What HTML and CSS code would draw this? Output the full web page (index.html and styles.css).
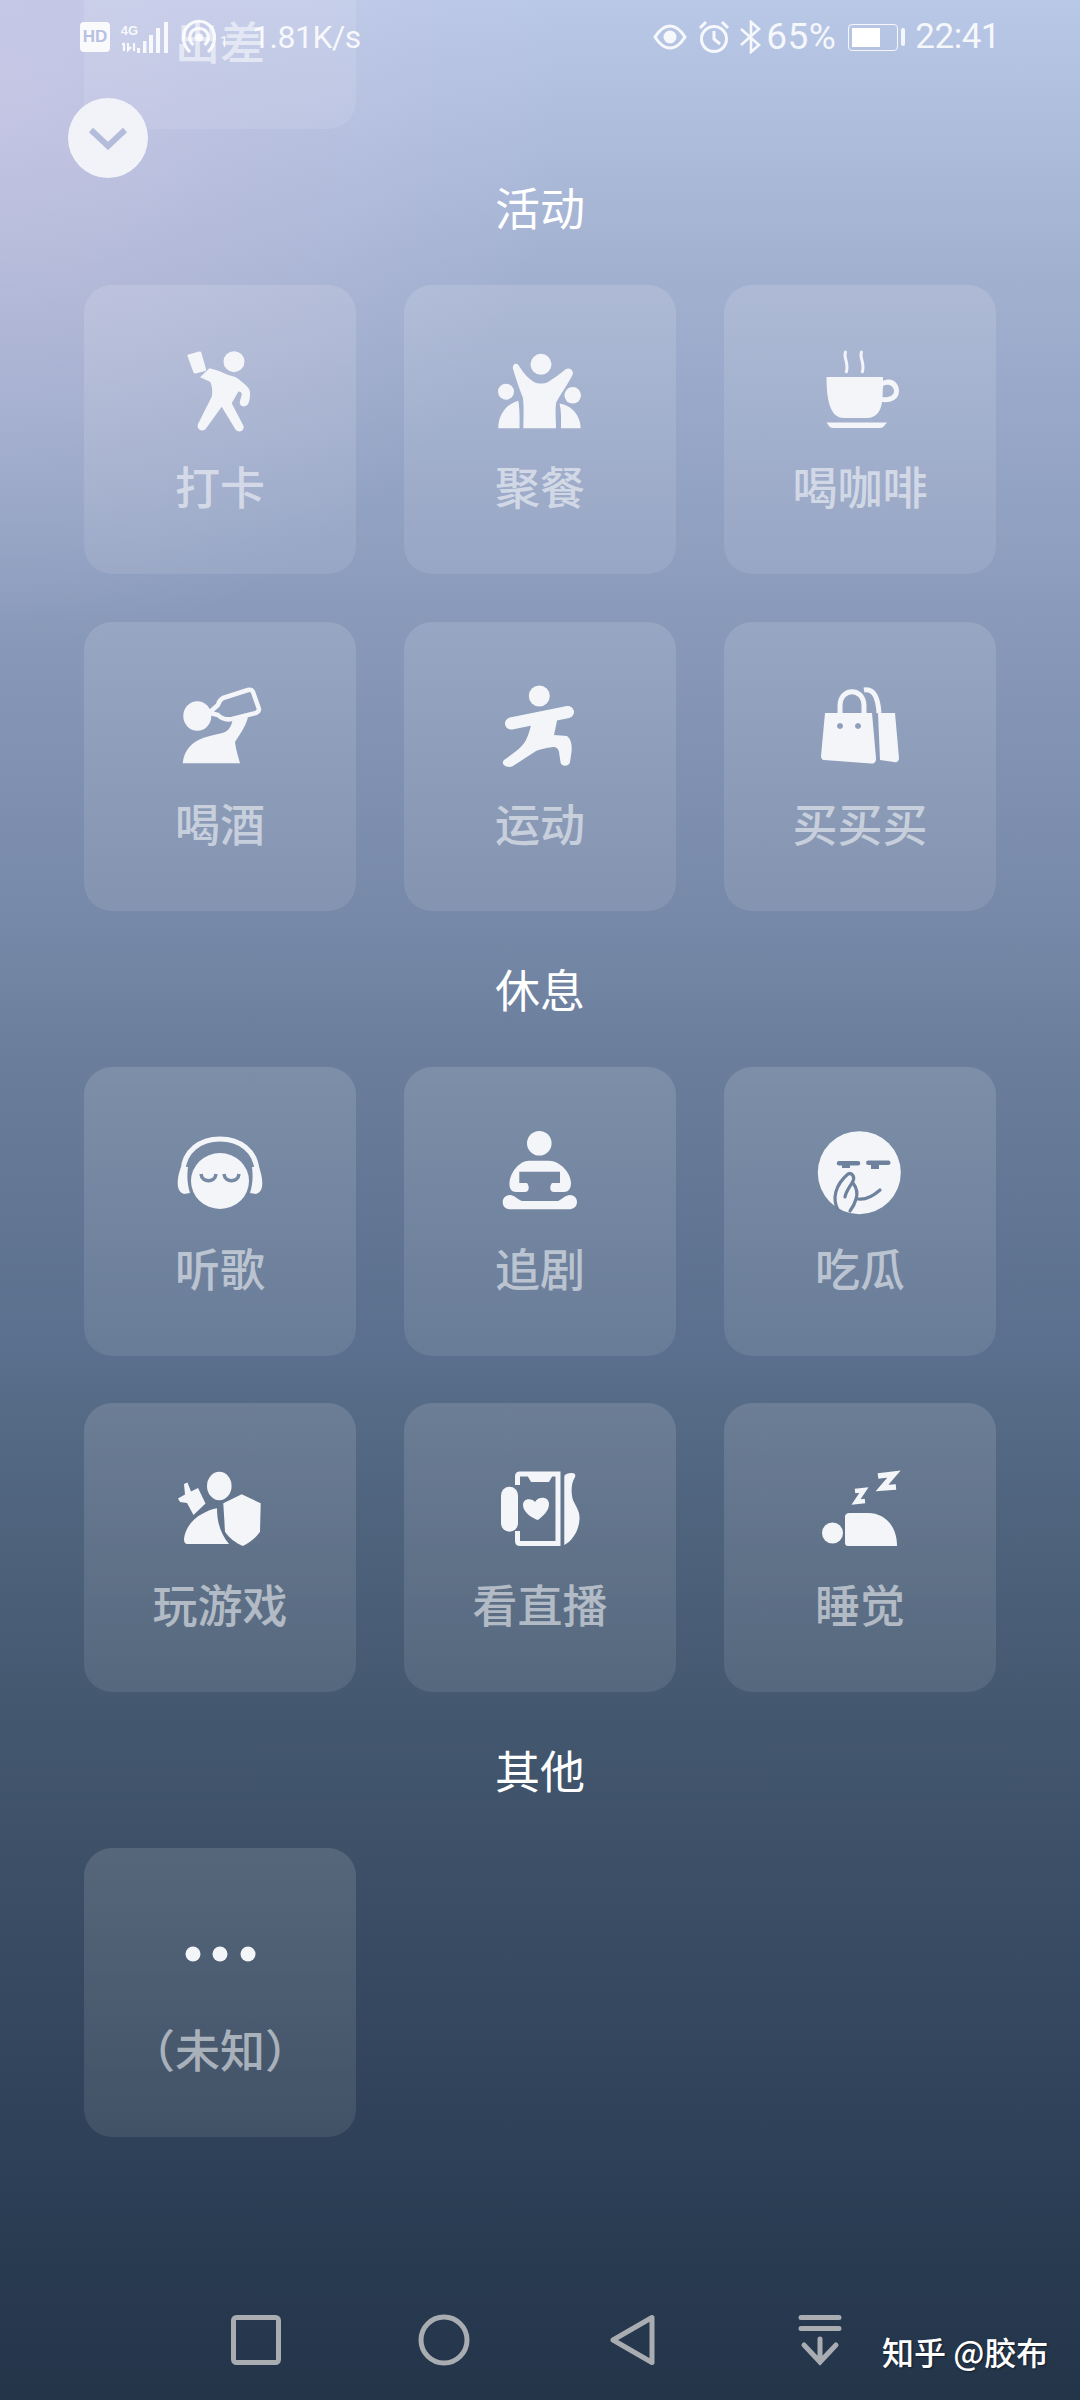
FILE: index.html
```html
<!DOCTYPE html>
<html lang="zh-CN">
<head>
    <meta charset="UTF-8">
    <meta name="viewport" content="width=device-width, initial-scale=1.0">
    <title>状态</title>
    <link rel="stylesheet" href="styles.css">
</head>
<body>
<div class="status-bar">
    <div class="status-left">
        <span class="hd-badge">HD</span>
        <span class="net-type">
            <span class="net-label">4G</span>
            <svg class="net-arrows" width="15" height="10" viewBox="0 0 15 10"><path d="M2 1v8M0 3l2-2M6 1v7l3-3M12 1v8" fill="none" stroke="currentColor" stroke-width="2.2"/></svg>
        </span>
        <svg class="signal" width="32" height="32" viewBox="0 0 32 32" fill="currentColor">
            <rect x="0" y="26" width="3" height="5"/><rect x="6" y="19" width="3.500" height="12"/><rect x="12" y="13" width="4" height="18"/><rect x="19" y="6" width="4" height="25"/><rect x="27" y="0" width="4" height="31"/>
        </svg>
        <svg class="hotspot" width="36" height="36" viewBox="0 0 36 36" fill="none" stroke="currentColor">
            <path d="M9 33C1 26 0 13 8 6c6-5 14-5 20 0 8 7 7 20-1 27" stroke-width="3.200"/>
            <path d="M12.500 26c-5-4-5-11 0-15 3-2 8-2 11 0 5 4 5 11 0 15" stroke-width="3.200"/>
            <circle cx="18" cy="18.500" r="4" fill="currentColor" stroke="none"/>
        </svg>
        <span class="hotspot-count">1</span>
        <span class="status-text speed">1.81K/s</span>
    </div>
    <div class="status-right">
        <svg class="status-eye" width="34" height="26" viewBox="0 0 34 26" fill="none" stroke="currentColor" stroke-width="3">
            <path d="M2 13C7 5 12 2 17 2s10 3 15 11c-5 8-10 11-15 11S7 21 2 13Z"/>
            <circle cx="17" cy="13" r="6.500" fill="currentColor" stroke="none"/>
        </svg>
        <svg width="32" height="34" viewBox="0 0 32 34" fill="none" stroke="currentColor" stroke-width="3">
            <circle cx="16" cy="19" r="12.500"/>
            <path d="M16 11v8l6 5M2 8l6-6M30 8l-6-6"/>
        </svg>
        <svg width="26" height="34" viewBox="0 0 26 34" fill="none" stroke="currentColor" stroke-width="2.600">
            <path d="M3 9l18 16-8 7V2l8 7L3 25"/>
        </svg>
        <span class="status-text percent">65%</span>
        <span class="battery"><span class="battery-level"></span></span>
        <span class="battery-tip"></span>
        <span class="status-text clock">22:41</span>
    </div>
</div>

<button class="collapse-btn">
    <svg width="40" height="24" viewBox="0 0 40 24" fill="none" stroke="#b4bcdc" stroke-width="6"><path d="M3 4l17 16L37 4"/></svg>
</button>

<main class="page">
    <div class="grid">
        <div class="card">
            <svg class="icon" viewBox="0 0 96 96"><path d="M12 34h72v44H12zM34 34V22h28v12" fill="#f3f5f9"/></svg>
            <span class="label">出差</span>
        </div>
    </div>

    <h2 class="section-title">活动</h2>
    <div class="grid">
        <div class="card">
            <svg class="icon" viewBox="0 0 96 96" fill="#f3f5f9">
                <path d="M16.500 9.500L27 6.500C28 6.200 29 6.500 29.300 7.500L34 24C34.300 25 33.800 25.700 33 26L23.500 28.500C22.500 28.800 21.800 28.300 21.500 27.500L15.500 11C15.200 10.300 15.700 9.700 16.500 9.500Z"/>
                <circle cx="62" cy="16.700" r="10.500"/>
                <path d="M28 32.300L37.300 23.300C44 25 50 27 56.300 30C62 31 66 33 69.700 36.700C75 41 79 44 78 50C78 54 77 58 75.300 60C73 62 69 62 68 59C67 56 70 52 69.700 48.300C69 47 67 46 66.300 46.700L59.700 58.300L71 80C74 85 67 89 63.500 84.500L49.700 61.700L34 83.500C30 88 24 84 26 79L39.700 51.700C41 46 40 40 38 36.700Z"/>
            </svg>
            <span class="label">打卡</span>
        </div>
        <div class="card">
            <svg class="icon" viewBox="0 0 96 96" fill="#f3f5f9">
                <circle cx="49" cy="19.300" r="10.500"/>
                <path d="M21 24C20 19 25 17 27 21C32 29 37 34 42 37C46 39 52 39 56 37C62 33 68 29 74 24C78 22 83 26 80 31C74 42 68 50 64 58C63 66 64 75 64 83.300H31.300C31.500 73 32 62 31 53C27 43 24 34 21 24Z"/>
                <circle cx="14" cy="46.700" r="8"/>
                <circle cx="80.700" cy="50.300" r="8.300"/>
                <path d="M6.300 83.300C6.300 70 14 59 26.300 55.700C28 65 27.500 75 27.500 83.300Z"/>
                <path d="M69 83.300C69 75 69.500 66 67.500 58.500C79 60 88.700 70 88.700 83.300Z"/>
            </svg>
            <span class="label">聚餐</span>
        </div>
        <div class="card">
            <svg class="icon" viewBox="0 0 96 96" fill="#f3f5f9">
                <path d="M34 6C30 12 38 18 34 28M50 6C46 12 54 18 50 28" fill="none" stroke="#f3f5f9" stroke-width="3"/>
                <path fill-rule="evenodd" d="M14.500 32H71V36C78 32 87 36 87 46C87 54 80 58 70 57C69 66 64 73 55 73H32C20 73 14.500 60 14.500 32ZM71 41C76 38 82 41 82 46C82 51 76 53 70.500 52Z"/>
                <path d="M14.500 77.500H75L72 81C71 83 68 83 66 83H24C21 83 18 83 17 81Z"/>
            </svg>
            <span class="label">喝咖啡</span>
        </div>
        <div class="card">
            <svg class="icon" viewBox="0 0 96 96" fill="#f3f5f9">
                <ellipse cx="25.300" cy="34" rx="14" ry="14.700"/>
                <path d="M38 30L46 23C47 19 49 17 51 16L76 8C78 7.500 80 8 81 10L87 27C87 29 86 30 84 31L60 37C55 38 50 37 46 33L38 31" fill="none" stroke="#f3f5f9" stroke-width="4.500" stroke-linejoin="round"/>
                <path d="M10.700 81.300C12 68 20 60 31 56C42 52 52 52 56 48C59 45 60 41 60.500 38.500L76 35C74 44 68 52 63 60C64 68 66 74 68 81.300Z"/>
            </svg>
            <span class="label">喝酒</span>
        </div>
        <div class="card">
            <svg class="icon" viewBox="0 0 96 96" fill="#f3f5f9">
                <circle cx="47.300" cy="14" r="10.500"/>
                <path d="M19 41.500L76 30" fill="none" stroke="#f3f5f9" stroke-width="12" stroke-linecap="round"/>
                <path d="M12 78C20 72 30 66 34 58C37 52 39 44 40 38L66 34L62 53L75 54C80 58 80 65 79.500 70L78 80C77 85 69 85 68.500 80L67 70C66 66 64 65 61 65C54 66 48 67 44 69L21 84C15 87 8 82 12 78Z"/>
            </svg>
            <span class="label">运动</span>
        </div>
        <div class="card">
            <svg class="icon" viewBox="0 0 96 96" fill="#f3f5f9">
                <path fill-rule="evenodd" d="M13 31H60L64 76C64.300 80 62 82 59 81.500L12 78C10 78 9 76 9 74ZM28 41a3 3 0 1 0 .01 0ZM46 41a3 3 0 1 0 .01 0Z"/>
                <path d="M66 31H83L87 76C87 79 85 81 82 80L68 78Z"/>
                <path d="M28 38V24C28 5 52 5 52 24V38" fill="none" stroke="#f3f5f9" stroke-width="5"/>
                <path d="M52 8C62 6 66 16 67 31" fill="none" stroke="#f3f5f9" stroke-width="5"/>
            </svg>
            <span class="label">买买买</span>
        </div>
    </div>

    <h2 class="section-title">休息</h2>
    <div class="grid">
        <div class="card">
            <svg class="icon" viewBox="0 0 96 96" fill="#f3f5f9">
                <ellipse cx="48" cy="54" rx="29" ry="28"/>
                <path d="M11 44C12 24 28 12 48 12C68 12 84 24 85 44" fill="none" stroke="#f3f5f9" stroke-width="5"/>
                <path d="M6 60C5 52 7 46 9 40L16 40C15 48 15 56 18 66L12 67C9 66 7 64 6 60Z"/>
                <path d="M90 60C91 52 89 46 87 40L80 40C81 48 81 56 78 66L84 67C87 66 89 64 90 60Z"/>
                <path d="M29 47C30 56 43 56 44 47M52 47C53 56 66 56 67 47" fill="none" stroke="#778aa5" stroke-width="3.500"/>
            </svg>
            <span class="label">听歌</span>
        </div>
        <div class="card">
            <svg class="icon" viewBox="0 0 96 96" fill="#f3f5f9">
                <circle cx="47.300" cy="16.300" r="12.300"/>
                <path d="M37 33.700H57C68 33.700 79 46 79 56C79 62 76 65 72 65H62C58 65 57 60 60 56H68V44.700H27.300V56H35C38 60 37 65 33 65H24C20 65 17 62 17.500 56C18 46 27 33.700 37 33.700Z"/>
                <path d="M18 68C22 68 25 72 30 74H66C70 72 74 68 78 68C82 68 85 71 85 75C85 80 81 82.300 77 82.300H19C14 82.300 10.700 80 10.700 75C10.700 71 14 68 18 68Z"/>
            </svg>
            <span class="label">追剧</span>
        </div>
        <div class="card">
            <svg class="icon" viewBox="0 0 96 96" fill="#f3f5f9">
                <circle cx="47.300" cy="45.700" r="41.500"/>
                <path d="M27 36.300H46M56.300 35.700H76.300" fill="none" stroke="#6e829d" stroke-width="4.500" stroke-linecap="round"/>
                <path d="M30 36H38V41H30ZM59 36H67V42H59Z" fill="#6e829d"/>
                <path d="M26 83C20 72 23 58 36 47C40 45 43 50 41 54C38 60 34 64 33 70M41 56C44 60 46 66 44 72C43 76 41 80 38 84M44 71.500C52 74 60 70 68 63" fill="none" stroke="#6e829d" stroke-width="3.200" stroke-linecap="round"/>
            </svg>
            <span class="label">吃瓜</span>
        </div>
        <div class="card">
            <svg class="icon" viewBox="0 0 96 96" fill="#f3f5f9">
                <ellipse cx="47.300" cy="23" rx="12.300" ry="14.300"/>
                <path d="M12 21L15.500 19.500L19 28.500L26 25L28 29L33.500 40.500L21.500 52L15 40L8 39L6 35.500L13 31.500Z"/>
                <path d="M12 76C13 66 20 56 30 51C35 48 40 46 45 45.300C45 58 48 70 57 81H16C13 81 12 79 12 76Z"/>
                <path d="M69.700 31.300L88.700 40.300L88 68.700C84 75 77 80 70.700 83C64 80 57 75 53 68.700L51.300 40.300Z"/>
            </svg>
            <span class="label">玩游戏</span>
        </div>
        <div class="card">
            <svg class="icon" viewBox="0 0 96 96" fill="#f3f5f9">
                <path d="M25.500 22V13.500C25.500 12 26 11 28 11H66V80.500H28C26 80.500 25.500 80 25.500 78V68" fill="none" stroke="#f3f5f9" stroke-width="5"/>
                <path d="M35 12L39 19H57L61 12Z"/>
                <path d="M31 42C31 35 40 35 43 39C46 33 57 33 57 41C57 48 51 53 46 57C42 56 31 50 31 42Z"/>
                <rect x="9" y="23.700" width="17" height="45" rx="8.500"/>
                <path d="M72.300 14C72.300 11 76 10 80 10C84 10 84 13 82 16C79 22 79 30 81 37C84 44 88 48 87.500 56C87 68 80 78 72.300 82Z"/>
            </svg>
            <span class="label">看直播</span>
        </div>
        <div class="card">
            <svg class="icon" viewBox="0 0 96 96" fill="#f3f5f9">
                <path d="M66 13L82 11L70 25L84 24" fill="none" stroke="#f3f5f9" stroke-width="5.500"/>
                <path d="M43 28L52 27L44 39L53 38" fill="none" stroke="#f3f5f9" stroke-width="4.500"/>
                <path d="M33 54C33 51 35 50 38 50L56 50C72 50 85 62 85 83L36 83C34 83 33 82 33 80Z"/>
                <ellipse cx="20.500" cy="70" rx="10.500" ry="10.500"/>
            </svg>
            <span class="label">睡觉</span>
        </div>
    </div>

    <h2 class="section-title">其他</h2>
    <div class="grid">
        <div class="card">
            <svg class="icon" viewBox="0 0 96 96" fill="#f3f5f9">
                <circle cx="21" cy="46" r="7.500"/><circle cx="48" cy="46" r="7.500"/><circle cx="76" cy="46" r="7.500"/>
            </svg>
            <span class="label">（未知）</span>
        </div>
    </div>
</main>

<nav class="nav-bar">
    <div class="nav-item">
        <svg width="52" height="52" viewBox="0 0 52 52" fill="none" stroke="#a9acb1" stroke-width="5"><rect x="3.500" y="3.500" width="45" height="45" rx="3"/></svg>
    </div>
    <div class="nav-item">
        <svg width="52" height="52" viewBox="0 0 52 52" fill="none" stroke="#a9acb1" stroke-width="5"><circle cx="26" cy="26" r="23"/></svg>
    </div>
    <div class="nav-item">
        <svg width="52" height="52" viewBox="0 0 52 52" fill="none" stroke="#a9acb1" stroke-width="5" stroke-linejoin="round"><path d="M46 3.500V48.500L7 26Z"/></svg>
    </div>
    <div class="nav-item">
        <svg width="52" height="52" viewBox="0 0 52 52" fill="none" stroke="#a9acb1" stroke-width="5" stroke-linecap="round"><path d="M7 3.500H45M7 14.500H45M26 25V48M10 31L26 48L42 31"/></svg>
    </div>
</nav>

<div class="watermark">知乎 @胶布</div>
</body>
</html>
```

FILE: styles.css
```css
html, body {
    margin: 0;
    padding: 0;
}

body {
    position: relative;
    width: 1080px;
    height: 2400px;
    overflow: hidden;
    display: flex;
    flex-direction: column;
    font-family: "Noto Sans CJK SC", "Noto Sans", sans-serif;
    background:
        radial-gradient(circle at 0 90px, rgba(208, 202, 230, 0.6), rgba(208, 202, 230, 0) 560px),
        linear-gradient(180deg, #bac8e8 0, #a2b0d0 280px, #8c9dbe 580px, #8899b9 620px, #7789a8 920px, #6a7e9c 1060px, #5a6f8d 1360px, #566b86 1400px, #445870 1700px, #2f4259 2120px, #283a50 2280px, #24354a 2400px);
}

.status-bar {
    position: absolute;
    top: 0;
    left: 0;
    right: 0;
    height: 74px;
    padding: 0 80px;
    display: flex;
    justify-content: space-between;
    align-items: center;
    color: rgba(255, 255, 255, 0.88);
}

.status-left, .status-right {
    display: flex;
    align-items: center;
}

.status-text {
    font-family: Roboto, sans-serif;
    font-size: 35px;
    line-height: 40px;
    letter-spacing: -0.5px;
}

.hd-badge {
    width: 30px;
    height: 30px;
    border-radius: 4px;
    background: rgba(255, 255, 255, 0.9);
    color: #b9c1e0;
    font-family: "Liberation Sans", sans-serif;
    font-size: 17px;
    font-weight: bold;
    line-height: 30px;
    text-align: center;
}

.net-type {
    width: 15px;
    margin-left: 12px;
    display: flex;
    flex-direction: column;
    align-items: center;
}

.net-label {
    font-family: "Liberation Sans", sans-serif;
    font-size: 13px;
    font-weight: bold;
    line-height: 15px;
}

.net-arrows {
    margin-top: 4px;
}

.signal {
    margin-top: 2px;
}

.hotspot {
    margin-left: 12px;
}

.hotspot-count {
    width: 8px;
    align-self: flex-start;
    margin-top: 17px;
    margin-left: 3px;
    font-family: Roboto, sans-serif;
    font-size: 14px;
    line-height: 16px;
}

.speed {
    margin-left: 24px;
    font-size: 32px;
}

.status-right svg {
    margin-right: 8px;
}

.status-right .status-eye {
    margin-right: 11px;
}

.percent {
    margin-left: -6px;
    font-size: 37px;
    letter-spacing: 0.5px;
}

.battery {
    width: 50px;
    height: 27px;
    margin-left: 12px;
    box-sizing: border-box;
    padding: 3px;
    border: 1.5px solid rgba(255, 255, 255, 0.85);
    border-radius: 4px;
}

.battery-level {
    display: block;
    width: 65%;
    height: 100%;
    background: #fff;
}

.battery-tip {
    width: 4px;
    height: 18px;
    margin: 0 10px 0 3px;
    border-radius: 2px;
    background: rgba(255, 255, 255, 0.85);
}

.collapse-btn {
    position: absolute;
    top: 98px;
    left: 68px;
    width: 80px;
    height: 80px;
    padding: 0;
    border: none;
    border-radius: 50%;
    background: #f2f3f8;
    display: flex;
    justify-content: center;
    align-items: center;
}

.page {
    flex: 1;
    margin-top: -160px;
    padding: 0 84px;
}

.grid {
    display: grid;
    grid-template-columns: repeat(3, 272px);
    column-gap: 48px;
    row-gap: 47.5px;
}

.card {
    height: 289px;
    box-sizing: border-box;
    padding-top: 60px;
    border-radius: 28px;
    background: linear-gradient(180deg, rgba(255, 255, 255, 0.13), rgba(255, 255, 255, 0.09));
    display: flex;
    flex-direction: column;
    align-items: center;
}

.icon {
    width: 96px;
    height: 96px;
    flex: none;
}

.label {
    margin-top: 17px;
    font-size: 45px;
    font-weight: 500;
    line-height: 56px;
    color: rgba(255, 255, 255, 0.55);
}

.section-title {
    margin: 0;
    padding: 56px 0;
    font-size: 45px;
    font-weight: 400;
    line-height: 44px;
    color: #fff;
    text-align: center;
}

.nav-bar {
    height: 110px;
    padding: 24px 0 0 162px;
    box-sizing: border-box;
    display: flex;
    flex: none;
}

.nav-item {
    width: 188px;
    height: 52px;
    display: flex;
    justify-content: center;
}

.watermark {
    position: absolute;
    left: 882px;
    top: 2327px;
    font-size: 32px;
    font-weight: 500;
    line-height: 48px;
    color: #fff;
    text-shadow: 1px 1px 2px rgba(0, 0, 0, 0.5);
}
```
